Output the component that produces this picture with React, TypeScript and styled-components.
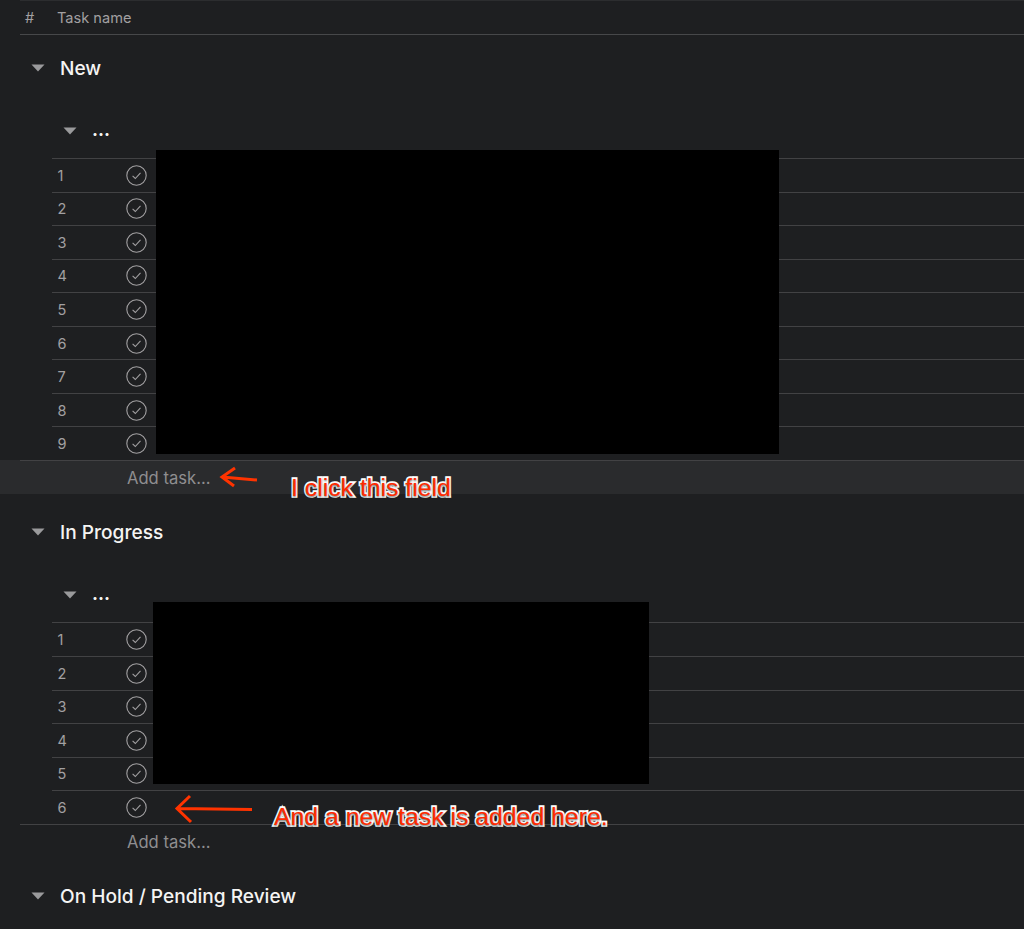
import React from "react";
import styled, { createGlobalStyle } from "styled-components";

const Global = createGlobalStyle`
  html, body { margin: 0; padding: 0; background: #1e1f21; }
  body { font-family: Inter, "Noto Sans", "Liberation Sans", sans-serif; overflow: hidden; }
`;

const Page = styled.div`
  position: relative;
  width: 1024px;
  height: 929px;
  background: #1e1f21;
  overflow: hidden;
`;

const Header = styled.div`
  box-sizing: border-box;
  height: 35px;
  margin-left: 20px;
  display: flex;
  align-items: center;
  border-top: 1px solid #2c2d2f;
  border-bottom: 1px solid #47484a;
  color: #a2a0a2;
  font-size: 14.6px;
`;

const HeaderNum = styled.span`
  width: 37px;
  padding-left: 5px;
  box-sizing: border-box;
`;

const Section = styled.section<{ $top: number }>`
  padding-top: ${(p) => p.$top}px;
`;

const SectionTitle = styled.div`
  height: 34px;
  display: flex;
  align-items: center;
  padding-left: 31px;
  gap: 15px;
  color: #f5f4f3;
  font-size: 19.1px;
  font-weight: 500;
`;

const SubHead = styled.div`
  height: 52px;
  margin-top: 21px;
  display: flex;
  align-items: center;
  padding-left: 63px;
  gap: 15px;
  padding-bottom: 2px;
  box-sizing: border-box;
`;

const Dots = styled.span`
  color: #f5f4f3;
  font-size: 18px;
  font-weight: 700;
  line-height: 18px;
  margin-top: -2px;
`;

const Row = styled.div`
  box-sizing: border-box;
  height: 33.56px;
  margin-left: 52px;
  display: flex;
  align-items: center;
  border-top: 1px solid #424244;
  color: #a2a0a2;
  font-size: 14.5px;
`;

const RowNum = styled.span`
  width: 74.3px;
  padding-left: 5.6px;
  box-sizing: border-box;
`;

const AddRow = styled.div<{ $active?: boolean }>`
  height: 34px;
  background: ${(p) => (p.$active ? "#2a2b2d" : "transparent")};
`;

const AddInner = styled.div`
  box-sizing: border-box;
  height: 34px;
  margin-left: 20px;
  padding-left: 107px;
  padding-top: 1px;
  display: flex;
  align-items: center;
  border-top: 1px solid #424244;
  color: #8f8e90;
  font-size: 16.6px;
`;

const Redaction = styled.div<{ $l: number; $t: number; $w: number; $h: number }>`
  position: absolute;
  left: ${(p) => p.$l}px;
  top: ${(p) => p.$t}px;
  width: ${(p) => p.$w}px;
  height: ${(p) => p.$h}px;
  background: #000;
`;

const Note = styled.div<{ $l: number; $t: number }>`
  position: absolute;
  left: ${(p) => p.$l}px;
  top: ${(p) => p.$t}px;
  font-family: "Liberation Sans", Arial, sans-serif;
  font-size: 24.8px;
  line-height: 28px;
  white-space: nowrap;
  color: #ff2a00;
  -webkit-text-stroke: 3.5px #ffffff;
  paint-order: stroke fill;
  text-shadow: 0 1px 2px rgba(0, 0, 0, 0.6);
`;

const ArrowSvg = styled.svg<{ $l: number; $t: number }>`
  position: absolute;
  left: ${(p) => p.$l}px;
  top: ${(p) => p.$t}px;
  overflow: visible;
`;

const Caret = () => (
  <svg width="14" height="8" viewBox="0 0 14 8">
    <path d="M0.5 0.5H13.5L7 7.5Z" fill="#9a9a9c" />
  </svg>
);

const Check = () => (
  <svg width="21" height="21" viewBox="0 0 21 21" fill="none" stroke="#a2a0a2">
    <circle cx="10.5" cy="10.5" r="9.7" strokeWidth="1.1" />
    <path d="M6.6 10.9l2.7 2.6 5.2-5.6" strokeWidth="1.1" />
  </svg>
);

const Rows = ({ n }: { n: number }) => (
  <>
    {Array.from({ length: n }, (_, i) => (
      <Row key={i}>
        <RowNum>{i + 1}</RowNum>
        <Check />
      </Row>
    ))}
  </>
);

const Heading = ({ title }: { title: string }) => (
  <SectionTitle>
    <Caret />
    <span>{title}</span>
  </SectionTitle>
);

const Sub = () => (
  <SubHead>
    <Caret />
    <Dots>...</Dots>
  </SubHead>
);

export default function App() {
  return (
    <Page>
      <Global />
      <Header>
        <HeaderNum>#</HeaderNum>
        <span>Task name</span>
      </Header>
      <Section $top={16}>
        <Heading title="New" />
        <Sub />
        <Rows n={9} />
        <AddRow $active>
          <AddInner>Add task...</AddInner>
        </AddRow>
      </Section>
      <Section $top={21.5}>
        <Heading title="In Progress" />
        <Sub />
        <Rows n={6} />
        <AddRow>
          <AddInner>Add task...</AddInner>
        </AddRow>
      </Section>
      <Section $top={21.5}>
        <Heading title="On Hold / Pending Review" />
      </Section>

      <Redaction $l={156} $t={150} $w={623} $h={304} />
      <Redaction $l={153} $t={602} $w={496} $h={182} />

      <ArrowSvg $l={215} $t={462} width="50" height="30" fill="none" stroke="#ff3300" strokeWidth="3">
        <path d="M7 15L42 18M20 6L7 15L19 24" />
      </ArrowSvg>
      <ArrowSvg $l={170} $t={790} width="90" height="40" fill="none" stroke="#ff3300" strokeWidth="3">
        <path d="M7 18.5L82 19.5M20 6L7 18.5L21 32" />
      </ArrowSvg>
      <Note $l={291} $t={474}>I click this field</Note>
      <Note $l={274} $t={803}>And a new task is added here.</Note>
    </Page>
  );
}
